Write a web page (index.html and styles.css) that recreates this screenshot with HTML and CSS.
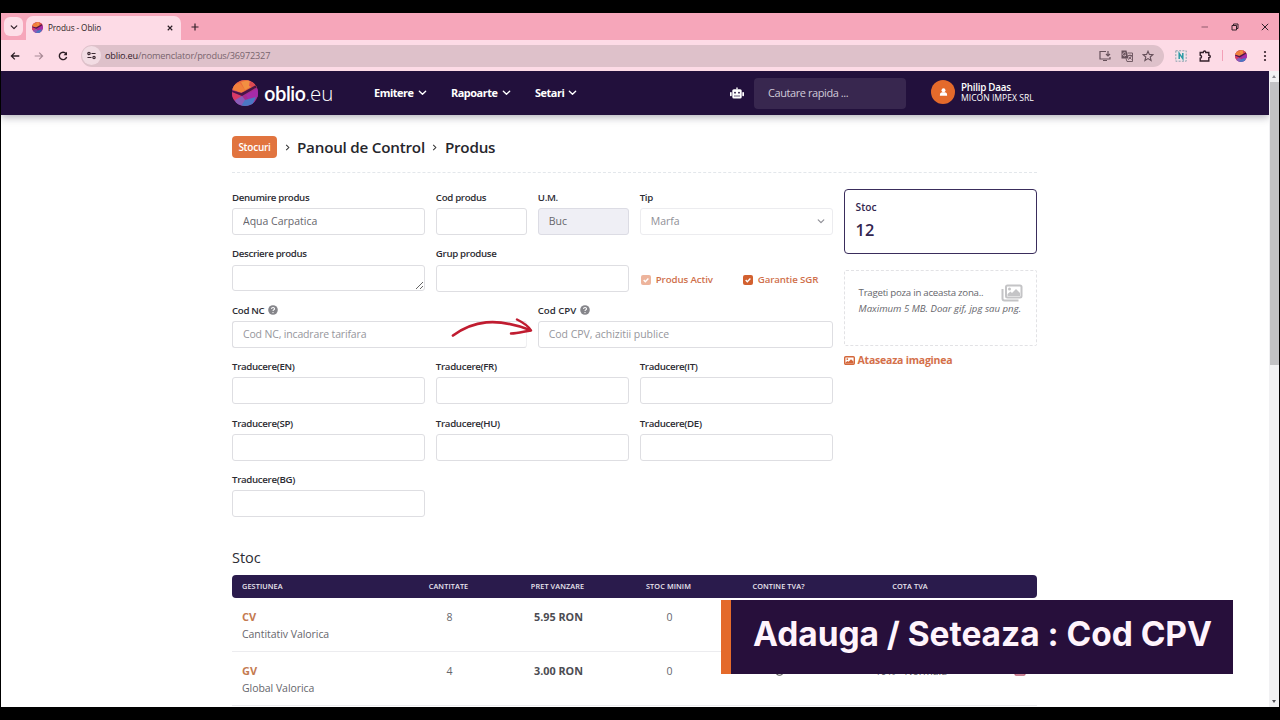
FILE: index.html
```html
<!DOCTYPE html>
<html lang="ro">
<head>
<meta charset="utf-8">
<title>Produs - Oblio</title>
<link rel="stylesheet" href="styles.css">
</head>
<body>
<svg class="defs" width="0" height="0" aria-hidden="true">
  <defs>
    <clipPath id="ball"><circle cx="13" cy="13" r="13"/></clipPath>
    <symbol id="logo" viewBox="0 0 26 26">
      <g clip-path="url(#ball)">
        <rect width="26" height="26" fill="#a62c8e"/>
        <path d="M0 0H26V7L13 13 0 10Z" fill="#ea6a3c"/>
        <path d="M9 2 17 0 22 5 13 10Z" fill="#f28f42"/>
        <path d="M0 5 8 3 13 10 9 13 0 9Z" fill="#f0803c"/>
        <path d="M18 0 26 6 22 8 17 6Z" fill="#dc4a52"/>
        <path d="M0 12 10 16 3 21 0 18Z" fill="#d83a66"/>
        <path d="M14 15 26 8V17L17 20Z" fill="#a52ba8"/>
        <path d="M3 20 10 16 14 21 9 26H4Z" fill="#8a5cb8"/>
        <path d="M9 26 13 20 24 17 20 26Z" fill="#4a78c4"/>
        <path d="M0 10.500 9.500 13 24 5 25.500 7 10 16 0 12Z" fill="#4a1548"/>
      </g>
    </symbol>
    <symbol id="down" viewBox="0 0 10 10"><path d="M1.500 3.500 5 7 8.500 3.500" fill="none" stroke="currentColor" stroke-width="1.500" stroke-linecap="round" stroke-linejoin="round"/></symbol>
    <symbol id="help" viewBox="0 0 10 10"><circle cx="5" cy="5" r="4.800" fill="#85858a"/><path d="M3.500 3.900C3.600 2 6.600 2.100 6.500 3.900 6.400 4.900 5 4.900 5 6" fill="none" stroke="#fff" stroke-width="1.100"/><circle cx="5" cy="7.600" r=".7" fill="#fff"/></symbol>
    <symbol id="check" viewBox="0 0 10 10"><rect width="10" height="10" rx="2" fill="currentColor"/><path d="M2.700 5 4.300 6.700 7.400 3.500" fill="none" stroke="#fff" stroke-width="1.400"/></symbol>
  </defs>
</svg>

<div class="browser">
  <header class="tabstrip">
    <span class="tab-search"><svg viewBox="0 0 10 10" width="8" height="8"><use href="#down"/></svg></span>
    <div class="tab">
      <svg class="favicon" width="11" height="11"><use href="#logo"/></svg>
      <span class="tab-title">Produs - Oblio</span>
      <svg class="tab-close" viewBox="0 0 8 8" width="6" height="6"><path d="M1 1 7 7M7 1 1 7" stroke="#2b1d24" stroke-width="1.500"/></svg>
    </div>
    <svg class="new-tab" viewBox="0 0 8 8" width="8" height="8"><path d="M4 .5V7.500M.5 4H7.500" stroke="#33202a" stroke-width="1.200"/></svg>
    <div class="window-buttons">
      <svg viewBox="0 0 8 8" width="8" height="8"><path d="M.5 4H7" stroke="#8f5a6c" stroke-width="1"/></svg>
      <svg viewBox="0 0 8 8" width="8" height="8"><path d="M1 2.500H5.500V7H1ZM2.500 2.500V1H7V5.500H5.500" fill="none" stroke="#33202a" stroke-width="1"/></svg>
      <svg viewBox="0 0 8 8" width="8" height="8"><path d="M.8 .8 7.200 7.200M7.200 .8 .8 7.200" stroke="#33202a" stroke-width="1"/></svg>
    </div>
  </header>

  <div class="toolbar">
    <svg class="t-back" viewBox="0 0 10 10" width="10" height="10"><path d="M9.300 5H1.500M4.800 1.600 1.400 5 4.800 8.400" fill="none" stroke="#2b1d24" stroke-width="1.300"/></svg>
    <svg class="t-fwd" viewBox="0 0 10 10" width="10" height="10"><path d="M.7 5H8.500M5.200 1.600 8.600 5 5.200 8.400" fill="none" stroke="#a88a95" stroke-width="1.200"/></svg>
    <svg class="t-reload" viewBox="0 0 10 10" width="10" height="10"><path d="M8 2.700A3.700 3.700 0 1 0 8.600 6" fill="none" stroke="#2b1d24" stroke-width="1.400"/><path d="M9 .7V4.200H5.500Z" fill="#2b1d24"/></svg>
    <div class="address">
      <span class="site-info"><svg viewBox="0 0 10 10" width="9" height="9"><g fill="none" stroke="#3b2a32" stroke-width="1.300"><circle cx="2.200" cy="2.800" r="1.300"/><path d="M5 2.800H9.500M.5 7.200H5"/><circle cx="7.800" cy="7.200" r="1.300"/></g></svg></span>
      <span class="url"><b>oblio.eu</b>/nomenclator/produs/36972327</span>
      <svg class="a-icon" viewBox="0 0 12 12" width="12" height="12"><path d="M7 1.500H1V9H11V7M4 10.500H8M9 1V5.500M7 4 9 6 11 4" fill="none" stroke="#66505a" stroke-width="1.200"/></svg>
      <svg class="a-icon" viewBox="0 0 12 12" width="12" height="12"><path d="M.5 .5H5.500L7.500 8.500H.5Z" fill="#66505a"/><path d="M6.500 3H11.500V11.500H6L5 8.500M7 5.500H11M9 4.500V5.500M10.500 5.500C10 8 8 9 7 9.500M7.700 6.500 10.500 9.500" fill="none" stroke="#66505a" stroke-width=".9"/><path d="M4.800 3.200A1.700 1.700 0 1 0 5 5H3.500" fill="none" stroke="#dec1ca" stroke-width=".8"/></svg>
      <svg class="a-icon" viewBox="0 0 12 12" width="12" height="12"><path d="M6 1.200 7.400 4.400 10.900 4.700 8.200 7 9.100 10.500 6 8.600 2.900 10.500 3.800 7 1.100 4.700 4.600 4.400Z" fill="none" stroke="#66505a" stroke-width="1.100"/></svg>
    </div>
    <svg class="ext-n" viewBox="0 0 12 12" width="12" height="12"><rect x=".8" y=".8" width="10.400" height="10.400" fill="#f3e3ea" stroke="#7f9aa6" stroke-width=".9" stroke-dasharray="2 1.300"/><path d="M4.200 9V3.400L7.800 8.600V3" fill="none" stroke="#2a9aa4" stroke-width="1.500"/></svg>
    <svg class="ext-puzzle" viewBox="0 0 12 12" width="12" height="12"><path d="M1.200 2.500H4.200C4.200 .5 6.800 .5 6.800 2.500H9.800V5.200C11.800 5.200 11.800 7.800 9.800 7.800V11H1.200V8.200C3 8 3 5.400 1.200 5.200Z" fill="none" stroke="#33202a" stroke-width="1.400"/></svg>
    <span class="divider"></span>
    <svg class="profile" width="12" height="12"><use href="#logo"/></svg>
    <svg class="kebab" viewBox="0 0 4 12" width="4" height="12"><g fill="#33202a"><circle cx="2" cy="2" r="1.100"/><circle cx="2" cy="6" r="1.100"/><circle cx="2" cy="10" r="1.100"/></g></svg>
  </div>

  <div class="viewport">
    <div class="page">
      <nav class="navbar">
        <div class="brand"><svg width="26" height="26"><use href="#logo"/></svg><span class="brand-name">oblio<i>.eu</i></span></div>
        <div class="menu">
          <a class="m1">Emitere <svg width="9" height="9"><use href="#down"/></svg></a>
          <a class="m2">Rapoarte <svg width="9" height="9"><use href="#down"/></svg></a>
          <a class="m3">Setari <svg width="9" height="9"><use href="#down"/></svg></a>
        </div>
        <svg class="robot" viewBox="0 0 14 12" width="14" height="12"><path d="M6.300 .5H7.700V2.500H6.300Z" fill="#fff"/><rect x="2.300" y="2.200" width="9.400" height="9.300" rx="1.500" fill="#fff"/><rect y="5" width="1.700" height="4.300" rx=".7" fill="#fff"/><rect x="12.300" y="5" width="1.700" height="4.300" rx=".7" fill="#fff"/><circle cx="5" cy="5.700" r=".9" fill="#22103c"/><circle cx="9" cy="5.700" r=".9" fill="#22103c"/><path d="M4.300 9H9.700" stroke="#22103c" stroke-dasharray="1.400 .6"/></svg>
        <div class="search">Cautare rapida ...</div>
        <span class="avatar"><svg viewBox="0 0 10 10" width="9" height="10"><circle cx="5" cy="3" r="2.200" fill="#fff"/><path d="M1 9.300V8C1 6 2.500 5.400 5 5.400S9 6 9 8V9.300Z" fill="#fff"/></svg></span>
        <div class="user"><span class="user-name">Philip Daas</span><span class="user-firm">MICON IMPEX SRL</span></div>
      </nav>

      <main class="container">
        <div class="crumbs">
          <span class="tag">Stocuri</span>
          <svg class="sep" viewBox="0 0 5 8" width="5" height="7"><path d="M1 1 4 4 1 7" fill="none" stroke="#333" stroke-width="1.200"/></svg>
          <span class="crumb c1">Panoul de Control</span>
          <svg class="sep" viewBox="0 0 5 8" width="5" height="7"><path d="M1 1 4 4 1 7" fill="none" stroke="#333" stroke-width="1.200"/></svg>
          <span class="crumb c2">Produs</span>
        </div>

        <div class="layout">
          <form class="form">
            <div class="field w2"><label>Denumire produs</label><input value="Aqua Carpatica"></div>
            <div class="field"><label>Cod produs</label><input></div>
            <div class="field"><label>U.M.</label><input class="locked" value="Buc"></div>
            <div class="field w2"><label>Tip</label><div class="select">Marfa<svg width="8" height="8"><use href="#down"/></svg></div></div>

            <div class="field w2"><label>Descriere produs</label><textarea></textarea></div>
            <div class="field w2"><label>Grup produse</label><input></div>
            <div class="checks w2">
              <span class="check off"><svg width="10" height="10"><use href="#check"/></svg>Produs Activ</span>
              <span class="check on"><svg width="10" height="10"><use href="#check"/></svg>Garantie SGR</span>
            </div>

            <div class="field w3"><label>Cod NC <svg width="10" height="10"><use href="#help"/></svg></label><input class="nc" placeholder="Cod NC, incadrare tarifara"></div>
            <div class="field w3"><label class="cpv">Cod CPV <svg width="10" height="10"><use href="#help"/></svg></label><input class="cpv" placeholder="Cod CPV, achizitii publice"></div>

            <div class="field w2"><label>Traducere(EN)</label><input></div>
            <div class="field w2"><label>Traducere(FR)</label><input></div>
            <div class="field w2"><label>Traducere(IT)</label><input></div>
            <div class="field w2"><label>Traducere(SP)</label><input></div>
            <div class="field w2"><label>Traducere(HU)</label><input></div>
            <div class="field w2"><label>Traducere(DE)</label><input></div>
            <div class="field w2"><label>Traducere(BG)</label><input></div>
          </form>

          <aside class="side">
            <div class="stock"><span class="stock-label">Stoc</span><span class="stock-value">12</span></div>
            <div class="drop">
              <span class="drop-a">Trageti poza in aceasta zona..</span>
              <em class="drop-b">Maximum 5 MB. Doar gif, jpg sau png.</em>
              <svg class="drop-icon" viewBox="0 0 22 18" width="22" height="18"><path d="M1.500 5V14.500Q1.500 16.500 3.500 16.500H17.500" fill="none" stroke="#c4c4c6" stroke-width="2"/><rect x="5" y="1.500" width="15.500" height="12" rx="1.500" fill="#fff" stroke="#c4c4c6" stroke-width="2"/><circle cx="8.500" cy="5" r="1.500" fill="#c4c4c6"/><path d="M6.500 12V10L9.500 7.500 11 9 15 5 19 9V12Z" fill="#c4c4c6"/></svg>
            </div>
            <a class="attach"><svg viewBox="0 0 11 9" width="11" height="9"><rect x=".7" y=".7" width="9.600" height="7.600" rx="1" fill="none" stroke="#d4673a" stroke-width="1.400"/><circle cx="3.300" cy="3.100" r=".9" fill="#d4673a"/><path d="M1.500 7.500V6.500L3.500 5 4.500 5.800 7 3.300 9.500 5.500V7.500Z" fill="#d4673a"/></svg>Ataseaza imaginea</a>
          </aside>
        </div>

        <h2 class="section-title">Stoc</h2>
        <div class="table">
          <div class="row head"><span class="first">GESTIUNEA</span><span>CANTITATE</span><span>PRET VANZARE</span><span>STOC MINIM</span><span>CONTINE TVA?</span><span>COTA TVA</span><span></span></div>
          <div class="row"><div class="first"><a>CV</a><small class="s1">Cantitativ Valorica</small></div><span>8</span><strong>5.95 RON</strong><span>0</span><span></span><span></span><span></span></div>
          <div class="row"><div class="first"><a>GV</a><small class="s2">Global Valorica</small></div><span>4</span><strong>3.00 RON</strong><span>0</span><span><svg viewBox="0 0 10 10" width="9" height="9"><circle cx="5" cy="5" r="4.200" fill="none" stroke="#555" stroke-width="1.300"/></svg></span><span>19% - Normala</span><span class="last"><svg viewBox="0 0 12 10" width="12" height="10"><rect x="1" y="1" width="10" height="8" rx="1" fill="none" stroke="#b85a72" stroke-width="1.300"/></svg></span></div>
        </div>
      </main>
    </div>
    <div class="scrollbar"><i class="arrow up"></i><i class="thumb"></i><i class="arrow dn"></i></div>
  </div>
</div>

<svg class="pointer" viewBox="0 0 84 24" width="84" height="24"><path d="M2 18.500C22 4 45 0 79 13" fill="none" stroke="#c01c30" stroke-width="2.700" stroke-linecap="round"/><path d="M66 2.500C71 5 77 8 80 13.500C74 14 68 16.500 60 16.500" fill="none" stroke="#c01c30" stroke-width="2.500" stroke-linecap="round" stroke-linejoin="round"/></svg>
<div class="caption"><span>Adauga / Seteaza : Cod CPV</span></div>
</body>
</html>
```
FILE: styles.css
```css
* { box-sizing: border-box; }
body { margin: 0; width: 1280px; height: 720px; overflow: hidden; background: #000; position: relative; font-family: "Open Sans", "Noto Sans", sans-serif; font-size: 10.500px; color: #66666c; }
svg { display: block; flex: none; }
.defs { position: absolute; }
.browser { height: 720px; padding: 13px 1px; display: flex; flex-direction: column; }

.tabstrip { height: 27px; flex: none; background: #f6a6ba; display: flex; align-items: center; padding: 0 8px 0 3px; }
.tab-search { width: 19px; height: 19px; border-radius: 6px; background: #fddfe8; display: flex; align-items: center; justify-content: center; color: #2b1d24; }
.tab { width: 155px; height: 24px; align-self: flex-end; margin-left: 3px; background: #fddbe6; border-radius: 7px 7px 0 0; display: flex; align-items: center; padding: 0 8px 1px 6px; }
.tab-title { font: 8.200px "Open Sans", sans-serif; color: #2b1d24; margin-left: 5px; flex: 1; white-space: nowrap; letter-spacing: -.1px; }
.new-tab { margin-left: 10px; }
.window-buttons { margin-left: auto; display: flex; gap: 22px; margin-right: 2px; }

.toolbar { height: 31px; flex: none; background: #fddbe6; display: flex; align-items: center; padding: 0 12px 0 9px; }
.t-fwd, .t-reload { margin-left: 14px; }
.address { margin-left: 13px; width: 1083px; height: 22px; border-radius: 11px; background: #dec1ca; display: flex; align-items: center; padding: 0 10px 0 1px; }
.site-info { width: 19px; height: 19px; border-radius: 50%; background: #f2dce3; display: flex; align-items: center; justify-content: center; }
.url { font: 9.200px "Open Sans", sans-serif; letter-spacing: -.19px; color: #78646d; margin-left: 4px; flex: 1; }
.url b { font-weight: 400; color: #33202a; }
.a-icon { margin-left: 9.500px; }
.ext-n { margin-left: 11px; }
.ext-puzzle { margin-left: 12px; }
.divider { width: 1px; height: 11px; background: #f3a0b7; margin-left: 11px; }
.profile { margin-left: 12px; }
.kebab { margin-left: 16px; }

.viewport { flex: 1; min-height: 0; display: flex; background: #fff; overflow: hidden; }
.page { flex: 1; min-width: 0; overflow: hidden; }
.navbar { height: 44px; background: #22103c; box-shadow: 0 2px 8px rgba(50, 50, 70, .4); display: flex; align-items: center; padding-left: 231px; color: #fff; white-space: nowrap; }
.brand { display: flex; align-items: center; gap: 6px; width: 142px; }
.brand-name { font-size: 19px; font-weight: 600; letter-spacing: -.9px; line-height: 24px; }
.brand-name i { font-style: normal; font-weight: 300; font-size: 20.500px; letter-spacing: 0; }
.menu { display: flex; width: 356px; font-size: 10.900px; font-weight: 700; letter-spacing: -.45px; line-height: 14px; padding-bottom: 1px; }
.menu a { display: flex; align-items: center; gap: 4px; }
.m1 { width: 77px; }
.m2 { width: 84px; }
.search { margin-left: 10px; width: 152px; height: 31px; border-radius: 4px; background: #38274f; color: #d0cad8; padding-left: 14px; line-height: 30px; font-size: 11px; letter-spacing: -.42px; }
.avatar { margin: -2px 0 0 25px; width: 24px; height: 24px; border-radius: 50%; background: #e46a2b; display: flex; align-items: center; justify-content: center; }
.user { margin-left: 6px; display: flex; flex-direction: column; line-height: 11.500px; }
.user-name { font-size: 9.800px; font-weight: 600; letter-spacing: -.25px; }
.user-firm { font-size: 8.600px; }

.container { width: 805px; margin-left: 231px; }
.crumbs { height: 58px; padding-top: 7px; border-bottom: 1px dashed #e3e7eb; display: flex; align-items: center; color: #26262c; white-space: nowrap; }
.tag { width: 45px; height: 22px; border-radius: 4px; background: #e1743f; color: #fff; font-size: 10px; font-weight: 600; line-height: 22px; text-align: center; letter-spacing: -.25px; }
.sep { margin: 1px 7.500px 0; }
.crumb { font-size: 15.200px; font-weight: 600; letter-spacing: -.22px; }

.layout { display: flex; gap: 10.600px; padding-top: 16px; height: 354px; }
.form { width: 601px; display: grid; grid-template-columns: repeat(6, 1fr); column-gap: 10.600px; grid-auto-rows: 56.400px; flex: none; }
.w2 { grid-column: span 2; }
.w3 { grid-column: span 3; }
.field label { height: 19.200px; line-height: 17px; font-size: 9.700px; font-weight: 600; letter-spacing: -.33px; color: #2c2c33; display: flex; gap: 3.500px; white-space: nowrap; }
.field label.cpv { letter-spacing: -.05px; }
.field label svg { margin-top: 3.500px; }
.field input, .field textarea, .select { display: block; width: 100%; height: 27px; border: 1px solid #dedee2; border-radius: 3px; background: #fff; padding: 0 10px 1px; font: 10.500px "Open Sans", sans-serif; color: #66666c; outline: none; }
.field textarea { height: 26.500px; }
.field input::placeholder { color: #96969c; opacity: 1; letter-spacing: -.16px; }
.field input.cpv::placeholder { letter-spacing: -.05px; }
.field .locked { background: #efeff5; border-color: #dcdce4; }
.field .nc { border-right-color: #f0f0f2; }
.select { display: flex; align-items: center; justify-content: space-between; color: #8f8f96; border-color: #ececef; padding-right: 7px; }
.checks { display: flex; padding: 24px 0 0 1px; height: 45px; align-items: center; font-size: 9.700px; font-weight: 600; letter-spacing: -.1px; color: #cf704b; white-space: nowrap; }
.check { display: flex; align-items: center; gap: 5px; width: 102px; flex: none; }
.check:last-child { width: auto; }
.check.off svg { color: #edb49c; }
.check.on svg { color: #d2602f; }

.side { flex: 1; min-width: 0; }
.stock { height: 65px; border: 1px solid #3a2d5c; border-radius: 4px; padding: 9px 11px; display: flex; flex-direction: column; color: #33264f; }
.stock-label { font-size: 10.200px; font-weight: 600; line-height: 16px; }
.stock-value { font-size: 16.300px; font-weight: 600; line-height: 30px; }
.drop { margin-top: 16px; height: 76px; border: 1px dashed #e2e2e5; border-radius: 2px; padding: 14px 13px; display: flex; flex-direction: column; line-height: 16px; position: relative; z-index: 0; white-space: nowrap; color: #66666c; }
.drop-a { font-size: 9.700px; letter-spacing: -.26px; margin-left: 1px; }
.drop-b { font-size: 9.650px; margin-left: 1px; }
.drop-icon { position: absolute; right: 13px; top: 13px; z-index: -1; }
.attach { display: flex; align-items: center; gap: 3px; margin-top: 6px; line-height: 16px; font-size: 10.500px; font-weight: 700; letter-spacing: -.22px; color: #d4704a; white-space: nowrap; }

.section-title { margin: 20px 0 0; height: 28px; line-height: 22px; font-size: 14.500px; font-weight: 400; color: #2c2c33; }
.row { display: grid; grid-template-columns: 163px 109px 109px 113px 107px 156px 48px; height: 54px; border-bottom: 1px solid #ececef; text-align: center; padding-top: 10px; line-height: 18px; white-space: nowrap; }
.row .first { text-align: left; padding-left: 10px; }
.row a { display: block; color: #c47a50; font-weight: 700; line-height: 18px; font-size: 11px; }
.row small { display: block; font-size: 10.500px; line-height: 17px; letter-spacing: -.05px; }
.row strong { color: #4c4c52; font-size: 10.800px; }
.row svg { margin: 5px auto 0; }
.row .last svg { margin: 4px 11px 0 auto; }
.row.head { grid-template-columns: 162px 109px 109px 113px 107px 156px 49px; height: 23px; padding: 0; border: 0; border-radius: 4px; background: #2a1b4c; color: #eae7f0; font-size: 7.300px; font-weight: 600; line-height: 23px; letter-spacing: .1px; }

.scrollbar { width: 10px; background: #f1f1f3; display: flex; flex-direction: column; align-items: center; padding: 4px 0; }
.thumb { width: 9px; height: 283px; background: #c1c1c4; margin: 4px 0 auto; }
.arrow { border: 2.500px solid transparent; }
.arrow.up { border-bottom: 3.500px solid #8a8a90; border-top: 0; }
.arrow.dn { border-top: 3.500px solid #505056; border-bottom: 0; }

.pointer { position: absolute; left: 451px; top: 317px; }
.caption { position: absolute; left: 721px; top: 600px; width: 512px; height: 74px; background: #270f3b; border-left: 10px solid #e46a2b; padding-left: 22px; font: 700 33.500px/69px Inter, sans-serif; letter-spacing: -.05px; color: #fff4fc; white-space: nowrap; }
```
